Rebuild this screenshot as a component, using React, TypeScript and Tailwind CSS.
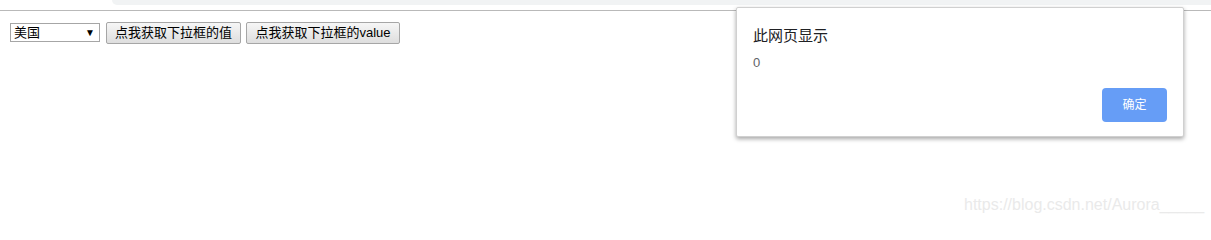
import React from "react";

const cjk = { fontFamily: '"Liberation Sans", "Noto Sans CJK SC", sans-serif' };

export default function App() {
  return (
    <div className="relative w-[1211px] h-[223px] bg-white overflow-hidden" style={cjk}>
      {/* browser chrome remnant */}
      <div className="h-[10px] flex">
        <div className="ml-[112px] flex-1 h-[5px] bg-[#f1f3f4] rounded-bl-[10px]" />
      </div>
      <div className="h-px bg-[#b9b9b9]" />

      {/* controls row */}
      <div className="flex items-center pl-[10px] pt-[10px] h-[33px]">
        <div className="w-[90px] h-[19px] border border-[#a6a6a6] bg-white flex items-center justify-between pl-[3px] pr-[4px] text-[13px] text-black leading-none">
          <span>美国</span>
          <span className="text-[10px]">▼</span>
        </div>
        <button className="ml-[6px] w-[135px] h-[22px] border border-[#a6a6a6] rounded-[2px] bg-gradient-to-b from-[#f6f6f6] to-[#dedede] text-[13px] text-black leading-none flex items-center justify-center">
          点我获取下拉框的值
        </button>
        <button className="ml-[5px] w-[154px] h-[22px] border border-[#a6a6a6] rounded-[2px] bg-gradient-to-b from-[#f6f6f6] to-[#dedede] text-[13px] text-black leading-none flex items-center justify-center">
          点我获取下拉框的value
        </button>
      </div>

      {/* alert dialog */}
      <div className="absolute left-[736px] top-[7px] w-[448px] h-[130px] bg-white border border-[#d0d0d0] rounded-[2px] shadow-[0_2px_4px_rgba(0,0,0,0.35)] flex flex-col px-[16px]">
        <div className="mt-[18px] text-[15px] leading-[20px] text-[#202124]">此网页显示</div>
        <div className="mt-[8px] text-[13px] leading-[18px] text-[#5f6368]">0</div>
        <div className="flex justify-end mt-auto mb-[14px]">
          <div className="w-[65px] h-[34px] rounded-[4px] bg-[#669df6] text-white text-[12px] flex items-center justify-center">
            确定
          </div>
        </div>
      </div>

      {/* watermark */}
      <div className="absolute left-[964px] top-[196px] text-[16px] leading-[18px] text-[#eaeaea]">
        https://blog.csdn.net/Aurora_____
      </div>
    </div>
  );
}
